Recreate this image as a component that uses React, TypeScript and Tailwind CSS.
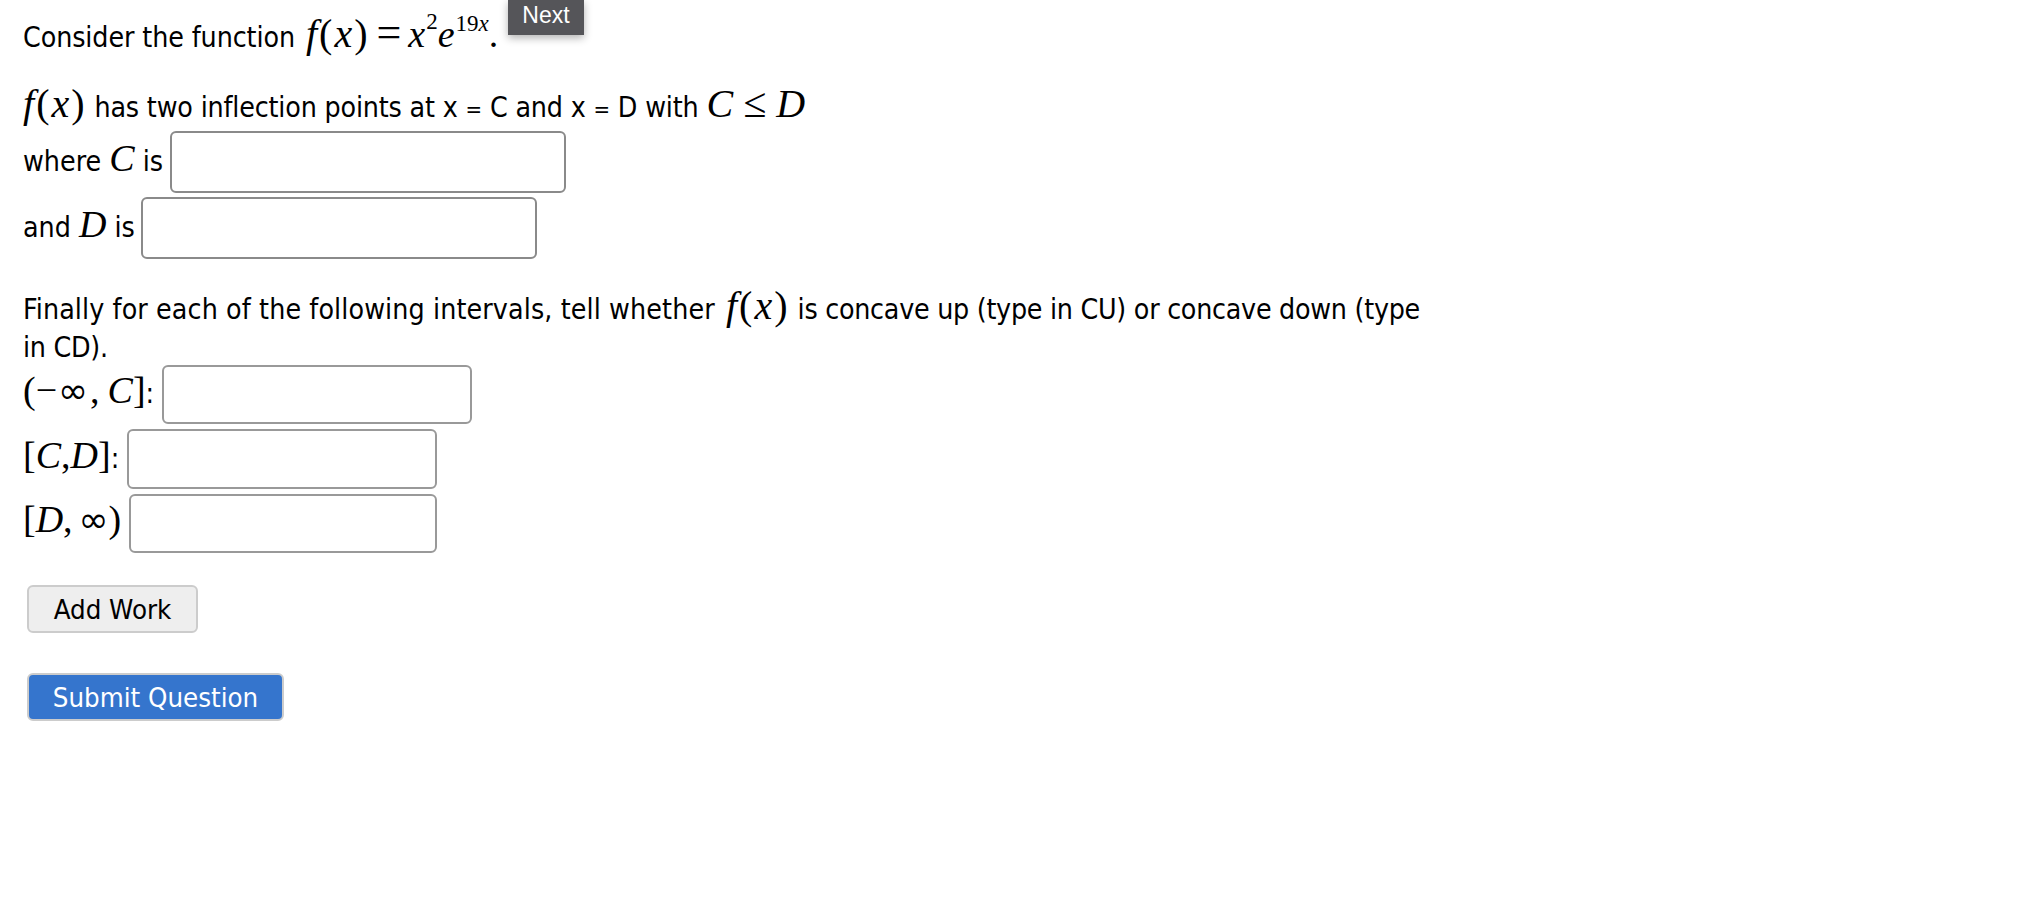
import React from "react";

const M = ({ children, className = "text-[38px]" }: { children: React.ReactNode; className?: string }) => (
  <span className={`font-['Liberation_Serif','Times_New_Roman',serif] leading-[37px] ${className}`}>{children}</span>
);
const I = ({ children, className = "" }: { children: React.ReactNode; className?: string }) => (
  <i className={`italic ${className}`}>{children}</i>
);
const Fx = ({ className = "" }: { className?: string }) => (
  <M className={`text-[40px] tracking-[2px] ${className}`}>
    <I>f</I>(<I>x</I>)
  </M>
);
const Inf = ({ className = "" }: { className?: string }) => (
  <span className={`font-['DejaVu_Sans',sans-serif] text-[36px] leading-none ${className}`}>∞</span>
);
const Eq = () => <span className="text-[22px]">=</span>;
const Input = ({ w, h, border = "border-[#8a8a8a]" }: { w: string; h: string; border?: string }) => (
  <input className={`${w} ${h} box-border rounded-[6px] border-2 ${border} bg-white`} />
);

export default function App() {
  return (
    <div className="relative min-h-[907px] overflow-hidden bg-white pl-[23px] text-[28.3px] leading-[37.5px] text-black font-['DejaVu_Sans_Condensed','DejaVu_Sans',sans-serif]">
      <div className="absolute left-[508px] top-0 flex h-[35px] w-[76px] items-center justify-center bg-[#555559] pb-[3px] text-[23px] text-white shadow-[0_3px_8px_rgba(0,0,0,0.3)] font-['Liberation_Sans',sans-serif]">
        Next
      </div>

      <div className="mt-[14px] flex h-[44px] items-baseline whitespace-pre">
        <span className="tracking-[-0.1px]">Consider the function </span>
        <Fx className="ml-[3px]" />
        <M className="mx-[7px] text-[44px]">=</M>
        <M className="text-[38px]">
          <I>x</I>
        </M>
        <M className="relative top-[-18px] ml-[1px] text-[23px]">2</M>
        <M className="text-[38px]">
          <I>e</I>
        </M>
        <M className="relative top-[-16px] ml-[1px] text-[23px]">
          19<I>x</I>
        </M>
        <M className="text-[38px]">.</M>
      </div>

      <div className="mt-[27px] flex h-[43px] items-baseline whitespace-pre">
        <Fx />
        <span className="tracking-[-0.17px]">
          {" has two inflection points at x "}
          <Eq />
          {" C and x "}
          <Eq />
          {" D with "}
        </span>
        <M className="text-[40px]">
          <I>C</I>
          <span className="mx-[10px] text-[42px]">≤</span>
          <I>D</I>
        </M>
      </div>

      <div className="mt-[3px] flex items-center gap-[7px] whitespace-pre">
        <span className="pb-[3px]">
          where <M><I>C</I></M> is
        </span>
        <Input w="w-[396px]" h="h-[62px]" />
      </div>

      <div className="mt-[4px] flex items-center gap-[6px] whitespace-pre">
        <span className="pb-[3px]">
          and <M><I>D</I></M> is
        </span>
        <Input w="w-[396px]" h="h-[62px]" />
      </div>

      <p className="mt-[28px] w-[1410px]">
        <span className="tracking-[0.11px]">Finally for each of the following intervals, tell whether </span>
        <Fx className="ml-[3px]" />{" "}
        <span className="tracking-[-0.27px]">is concave up (type in CU) or concave down (type in CD).</span>
      </p>

      <div className="mt-[-1px] flex items-center gap-2">
        <span className="whitespace-pre pb-[4px]">
          <M className="text-[38px]">
            (−<Inf className="ml-[1px]" /><span className="ml-[2px]">,</span><I className="ml-[8px]">C</I>]
          </M>
          :
        </span>
        <Input w="w-[310px]" h="h-[59px]" border="border-[#999999]" />
      </div>
      <div className="mt-[5px] flex items-center gap-2">
        <span className="whitespace-pre pb-[4px]">
          <M className="text-[38px]">
            [<I>C</I>,<I>D</I>]
          </M>
          :
        </span>
        <Input w="w-[310px]" h="h-[60px]" border="border-[#999999]" />
      </div>
      <div className="mt-[5px] flex items-center gap-2">
        <span className="whitespace-pre pb-[4px]">
          <M className="text-[38px]">
            [<I>D</I>,<Inf className="ml-[6px]" />)
          </M>
        </span>
        <Input w="w-[308px]" h="h-[59px]" border="border-[#999999]" />
      </div>

      <button className="ml-[4px] mt-[32px] block h-[48px] w-[171px] rounded-[6px] border-2 border-[#cccccc] bg-[#eeeeee] pt-[1px] text-[27.4px] text-black">
        Add Work
      </button>
      <button className="ml-[4px] mt-[40px] block h-[48px] w-[257px] rounded-[6px] border-2 border-[#cccccc] bg-[#3575cd] pt-[1px] text-[27.4px] text-white">
        Submit Question
      </button>
    </div>
  );
}
